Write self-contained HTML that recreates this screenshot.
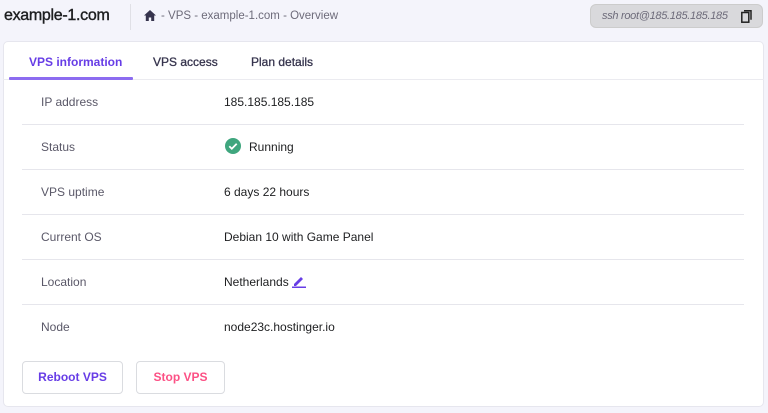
<!DOCTYPE html><html><head><style>
body{margin:0;width:768px;height:413px;background:#f4f4fb;font-family:"Liberation Sans",sans-serif;position:relative;overflow:hidden;color:#2f1c6a}
.a{position:absolute}
.row{position:absolute;left:22px;width:722px;height:45px;border-bottom:1px solid #e6e6ec;font-size:12px;color:#36344d}
.row .l{position:absolute;left:19px;top:16px;color:#5a5868}
.row .v{position:absolute;left:202px;top:16px;color:#1d1e20}
.btn{position:absolute;top:361px;height:31px;border:1px solid #dadce0;border-radius:4px;background:#fff;font-size:12px;font-weight:bold;text-align:center;line-height:31px}
</style></head><body>
<div class="a" style="left:4px;top:7px;font-size:16px;color:#1d1e20;letter-spacing:-0.3px;-webkit-text-stroke:0.4px #1d1e20">example-1.com</div>
<div class="a" style="left:130px;top:4px;width:1px;height:26px;background:#e0e0e6"></div>
<svg class="a" style="left:144px;top:10px" width="12" height="11" viewBox="0 0 12 11"><path d="M6 0L0 5.5h1.8V11h3V7.5h2.4V11h3V5.5H12z" fill="#36344d"/></svg>
<div class="a" style="left:161px;top:10px;font-size:11.5px;color:#6d6b7a">- VPS - example-1.com - Overview</div>
<div class="a" style="left:590px;top:4px;width:173px;height:24px;background:#d9d9dc;border-radius:6px;border:1px solid #ccc;box-sizing:border-box"></div>
<div class="a" style="left:602px;top:10px;font-size:11px;color:#6d6b7a;font-style:italic;letter-spacing:-0.3px">ssh root@185.185.185.185</div>
<svg class="a" style="left:741px;top:10px" width="11" height="13" viewBox="0 0 11 13"><rect x="0.8" y="2.5" width="7" height="9.7" fill="none" stroke="#222" stroke-width="1.5"/><path d="M3 0.8h7v9" fill="none" stroke="#222" stroke-width="1.5"/></svg>
<div class="a" style="left:3px;top:41px;width:761px;height:366px;background:#fff;border:1px solid #e6e6ee;border-radius:5px;box-sizing:border-box"></div>
<div class="a" style="left:3px;top:79px;width:761px;height:1px;background:#ebebf0"></div>
<div class="a" style="left:29px;top:55px;font-size:12px;font-weight:bold;color:#673de6">VPS information</div>
<div class="a" style="left:9px;top:77px;width:124px;height:3px;background:#8c6cf0;border-radius:1px"></div>
<div class="a" style="left:153px;top:55px;font-size:12px;color:#36344d;-webkit-text-stroke:0.3px #36344d">VPS access</div>
<div class="a" style="left:251px;top:55px;font-size:12px;color:#36344d;-webkit-text-stroke:0.3px #36344d">Plan details</div>
<div class="row" style="top:79px"><span class="l">IP address</span><span class="v">185.185.185.185</span></div>
<div class="row" style="top:124px"><span class="l">Status</span><svg class="a" style="left:203px;top:14px" width="16" height="16" viewBox="0 0 16 16"><circle cx="8" cy="8" r="8" fill="#3fa67e"/><path d="M4.3 8.2l2.5 2.5 4.9-5" fill="none" stroke="#fff" stroke-width="1.8"/></svg><span class="v" style="left:227px">Running</span></div>
<div class="row" style="top:169px"><span class="l">VPS uptime</span><span class="v">6 days 22 hours</span></div>
<div class="row" style="top:214px"><span class="l">Current OS</span><span class="v">Debian 10 with Game Panel</span></div>
<div class="row" style="top:259px"><span class="l">Location</span><span class="v">Netherlands</span><svg class="a" style="left:270px;top:15px" width="14" height="14" viewBox="0 0 14 14"><path d="M2 10l7-7 2 2-7 7H2z" fill="#673de6"/><rect x="0" y="12.5" width="14" height="1.5" fill="#673de6"/></svg></div>
<div class="row" style="top:304px;border-bottom:none"><span class="l">Node</span><span class="v">node23c.hostinger.io</span></div>
<div class="btn" style="left:22px;width:99px;color:#673de6">Reboot VPS</div>
<div class="btn" style="left:136px;width:87px;color:#fc5185">Stop VPS</div>
</body></html>
